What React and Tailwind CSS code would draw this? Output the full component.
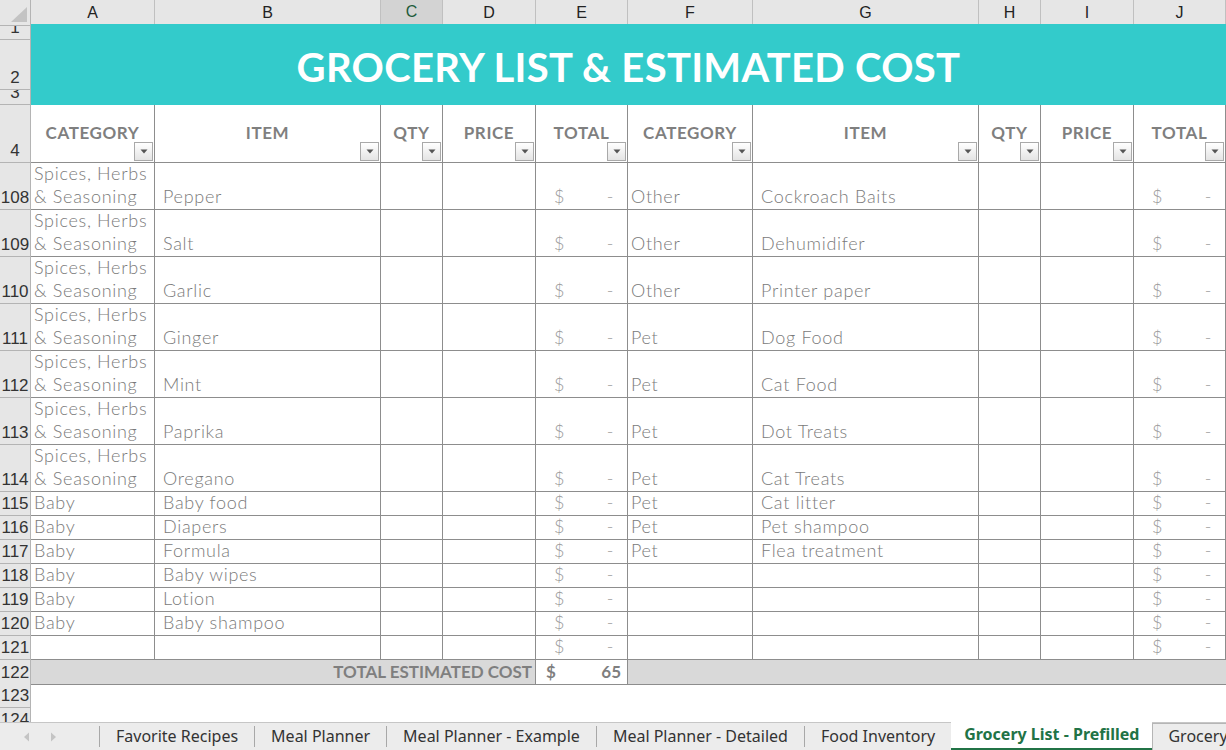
const COLS = 'grid grid-cols-[31px_124px_226px_62px_93px_92px_125px_226px_62px_93px_92px]'

const SPICE = ['Spices, Herbs', '& Seasoning']

const ROWS = [
  { n: 108, tall: true, l: [SPICE, 'Pepper'], r: ['Other', 'Cockroach Baits'] },
  { n: 109, tall: true, l: [SPICE, 'Salt'], r: ['Other', 'Dehumidifer'] },
  { n: 110, tall: true, l: [SPICE, 'Garlic'], r: ['Other', 'Printer paper'] },
  { n: 111, tall: true, l: [SPICE, 'Ginger'], r: ['Pet', 'Dog Food'] },
  { n: 112, tall: true, l: [SPICE, 'Mint'], r: ['Pet', 'Cat Food'] },
  { n: 113, tall: true, l: [SPICE, 'Paprika'], r: ['Pet', 'Dot Treats'] },
  { n: 114, tall: true, l: [SPICE, 'Oregano'], r: ['Pet', 'Cat Treats'] },
  { n: 115, l: ['Baby', 'Baby food'], r: ['Pet', 'Cat litter'] },
  { n: 116, l: ['Baby', 'Diapers'], r: ['Pet', 'Pet shampoo'] },
  { n: 117, l: ['Baby', 'Formula'], r: ['Pet', 'Flea treatment'] },
  { n: 118, l: ['Baby', 'Baby wipes'], r: ['', ''] },
  { n: 119, l: ['Baby', 'Lotion'], r: ['', ''] },
  { n: 120, l: ['Baby', 'Baby shampoo'], r: ['', ''] },
  { n: 121, l: ['', ''], r: ['', ''] },
]

const TABS = ['Favorite Recipes', 'Meal Planner', 'Meal Planner - Example', 'Meal Planner - Detailed', 'Food Inventory']

const cell = 'border-r border-b border-[#8d8d8d] overflow-hidden whitespace-nowrap'
const dataText = "font-['Lato',sans-serif] font-light text-[18px] tracking-[0.7px] leading-[23px] text-[#7a7a7a]"

function RowNum({ n, className = '' }) {
  return (
    <div className={`bg-[#e6e6e6] border-r border-b border-[#b4b4b4] flex items-end justify-center overflow-hidden font-['Liberation_Sans',sans-serif] text-[17px] leading-[22px] text-[#333] ${className}`}>
      {n}
    </div>
  )
}

function Filter() {
  return (
    <div className="absolute right-[1px] bottom-[1px] w-[19px] h-[19px] border border-[#a9a9a9] bg-gradient-to-b from-white to-[#e4e4e4] flex items-center justify-center">
      <svg width="8" height="5" viewBox="0 0 8 5"><path d="M0.5 0.5h7L4 4.5z" fill="#555" /></svg>
    </div>
  )
}

function Head({ label }) {
  return (
    <div className={`relative ${cell} flex items-center justify-center`}>
      <span className="font-['Lato',sans-serif] font-bold text-[17px] tracking-[0.6px] text-[#7f7f7f] -mt-[2px]">{label}</span>
      <Filter />
    </div>
  )
}

function Cat({ v }) {
  const lines = Array.isArray(v) ? v : [v]
  return (
    <div className={`${cell} ${dataText} flex flex-col justify-end pl-[3px] pb-[1px]`}>
      {lines.map((t, i) => <div key={i}>{t}</div>)}
    </div>
  )
}

function Item({ v }) {
  return <div className={`${cell} ${dataText} flex items-end pl-[8px] pb-[1px]`}>{v}</div>
}

function Empty() {
  return <div className={cell} />
}

function Money() {
  return (
    <div className={`${cell} ${dataText} flex items-end justify-between pl-[18px] pr-[13px] pb-[1px] text-[#9a9a9a]`}>
      <span>$</span><span>-</span>
    </div>
  )
}

function DataRow({ r }) {
  return (
    <div className={`${COLS} ${r.tall ? 'h-[47px]' : 'h-[24px]'}`}>
      <RowNum n={r.n} />
      <Cat v={r.l[0]} />
      <Item v={r.l[1]} />
      <Empty />
      <Empty />
      <Money />
      <div className={`${cell} ${dataText} flex items-end pl-[3px] pb-[1px]`}>{r.r[0]}</div>
      <Item v={r.r[1]} />
      <Empty />
      <Empty />
      <Money />
    </div>
  )
}

function ColHead() {
  const letters = ['A', 'B', 'C', 'D', 'E', 'F', 'G', 'H', 'I', 'J']
  return (
    <div className={`${COLS} h-[24px]`}>
      <div className="bg-[#e6e6e6] border-r border-b border-[#b4b4b4] relative">
        <svg className="absolute right-[3px] bottom-[3px]" width="16" height="15" viewBox="0 0 16 15"><path d="M16 0V15H0z" fill="#c3c3c3" /></svg>
      </div>
      {letters.map(l => (
        <div
          key={l}
          className={`border-r border-[#c0c0c0] flex items-center justify-center font-['Liberation_Sans',sans-serif] text-[16px] ${l === 'C' ? 'bg-[#d3d3d3] text-[#1d5b3a] border-b-2 border-b-[#217346]' : 'bg-[#e6e6e6] text-[#222] border-b border-b-[#b4b4b4]'}`}
        >
          {l}
        </div>
      ))}
    </div>
  )
}

export default function App() {
  return (
    <div className="w-[1226px] h-[750px] overflow-hidden flex flex-col bg-white">
      <div className="h-[722px] overflow-hidden">
        <ColHead />

        <div className="flex h-[81px]">
          <div className="w-[31px] flex flex-col">
            <RowNum n={1} className="h-[16px]" />
            <RowNum n={2} className="h-[50px]" />
            <RowNum n={3} className="h-[15px]" />
          </div>
          <div className="flex-1 bg-[#33cbcb] flex items-center justify-center pt-[4px]">
            <h1 className="font-['Lato',sans-serif] font-bold text-[40px] leading-none text-white tracking-[0.3px]">
              GROCERY LIST &amp; ESTIMATED COST
            </h1>
          </div>
        </div>

        <div className={`${COLS} h-[58px]`}>
          <RowNum n={4} />
          <Head label="CATEGORY" />
          <Head label="ITEM" />
          <Head label="QTY" />
          <Head label="PRICE" />
          <Head label="TOTAL" />
          <Head label="CATEGORY" />
          <Head label="ITEM" />
          <Head label="QTY" />
          <Head label="PRICE" />
          <Head label="TOTAL" />
        </div>

        {ROWS.map(r => <DataRow key={r.n} r={r} />)}

        <div className="grid grid-cols-[31px_505px_92px_598px] h-[24px]">
          <RowNum n={122} />
          <div className="bg-[#d9d9d9] border-r border-b border-[#8d8d8d] flex items-end justify-end pr-[3px] pb-[1px] font-['Lato',sans-serif] font-bold text-[17px] leading-[23px] text-[#7f7f7f]">
            TOTAL ESTIMATED COST
          </div>
          <div className="bg-white border-r border-b border-[#8d8d8d] flex items-end justify-between pl-[10px] pr-[6px] pb-[1px] font-['Lato',sans-serif] font-bold text-[17px] leading-[23px] text-[#7f7f7f]">
            <span>$</span><span>65</span>
          </div>
          <div className="bg-[#d9d9d9] border-b border-[#8d8d8d]" />
        </div>

        <div className="flex h-[24px]">
          <RowNum n={123} className="w-[31px]" />
          <div className="flex-1" />
        </div>
        <div className="flex h-[24px]">
          <RowNum n={124} className="w-[31px]" />
          <div className="flex-1" />
        </div>
      </div>

      <div className="h-[28px] bg-[#ececec] border-t border-[#c6c6c6] flex items-stretch font-['Noto_Sans',sans-serif] text-[16px] text-[#333] whitespace-nowrap">
        <div className="w-[100px] shrink-0 flex items-center gap-[20px] pl-[23px] border-r border-[#a8a8a8] my-[3px]">
          <svg width="7" height="10" viewBox="0 0 7 10"><path d="M6 0.5L1 5l5 4.5z" fill="#c4c4c4" /></svg>
          <svg width="7" height="10" viewBox="0 0 7 10"><path d="M1 0.5L6 5l-5 4.5z" fill="#c4c4c4" /></svg>
        </div>
        {TABS.map((t, i) => (
          <div key={t} className={`shrink-0 flex items-center px-[16px] pb-[2px] ${i < TABS.length - 1 ? 'border-r border-[#a8a8a8] my-[3px]' : ''}`}>
            {t}
          </div>
        ))}
        <div className="shrink-0 flex items-center px-[13px] pb-[2px] bg-white border-b-2 border-[#217346] font-bold text-[#217346] -mt-[1px]">
          Grocery List - Prefilled
        </div>
        <div className="shrink-0 flex items-center pl-[15px] pb-[2px] border-l border-t border-[#b5b5b5] bg-[#ececec]">
          Grocery List
        </div>
      </div>
    </div>
  )
}
